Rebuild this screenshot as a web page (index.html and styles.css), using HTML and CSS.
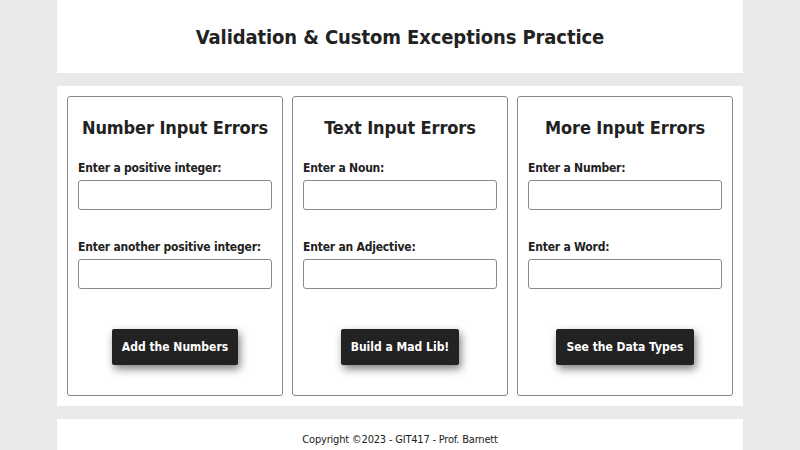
FILE: index.html
```html
<!DOCTYPE html>
<html lang="en">
<head>
    <meta charset="UTF-8">
    <meta name="viewport" content="width=device-width, initial-scale=1.0">
    <title>Validation &amp; Custom Exceptions Practice</title>
    <link rel="stylesheet" href="styles.css">
</head>
<body>
    <header class="page-header">
        <h1>Validation &amp; Custom Exceptions Practice</h1>
    </header>

    <main class="practice">
        <section class="card">
            <h2>Number Input Errors</h2>
            <label for="num1">Enter a positive integer:</label>
            <input type="text" id="num1">
            <label for="num2">Enter another positive integer:</label>
            <input type="text" id="num2">
            <button id="add-btn">Add the Numbers</button>
        </section>

        <section class="card">
            <h2>Text Input Errors</h2>
            <label for="noun">Enter a Noun:</label>
            <input type="text" id="noun">
            <label for="adjective">Enter an Adjective:</label>
            <input type="text" id="adjective">
            <button id="madlib-btn">Build a Mad Lib!</button>
        </section>

        <section class="card">
            <h2>More Input Errors</h2>
            <label for="number">Enter a Number:</label>
            <input type="text" id="number">
            <label for="word">Enter a Word:</label>
            <input type="text" id="word">
            <button id="types-btn">See the Data Types</button>
        </section>
    </main>

    <footer class="page-footer">
        <p>Copyright &copy;2023 - GIT417 - Prof. Barnett</p>
    </footer>
</body>
</html>
```

FILE: styles.css
```css
* {
    box-sizing: border-box;
    margin: 0;
    padding: 0;
}

body {
    background-color: #e9e9e9;
    color: #222;
    font-family: "DejaVu Sans Condensed", "DejaVu Sans", sans-serif;
    width: 686px;
    margin: 0 auto;
}

.page-header {
    background: white;
    height: 73px;
    display: flex;
    align-items: center;
    justify-content: center;
    margin-bottom: 13px;
}

.page-header h1 {
    font-size: 20px;
    font-weight: bold;
    letter-spacing: -0.1px;
}

.practice {
    background: white;
    display: flex;
    gap: 9px;
    padding: 10px;
    margin-bottom: 13px;
}

.card {
    flex: 1;
    height: 300px;
    border: 1px solid #8a8a8a;
    border-radius: 3px;
    padding: 10px;
    display: flex;
    flex-direction: column;
}

.card h2 {
    font-size: 18px;
    line-height: 22px;
    letter-spacing: -0.1px;
    text-align: center;
    margin: 10px 0 21px;
}

.card label {
    font-size: 12px;
    font-weight: bold;
    line-height: 16px;
    letter-spacing: -0.2px;
    white-space: nowrap;
    margin-bottom: 4px;
}

.card input {
    height: 30px;
    border: 1px solid #8a8a8a;
    border-radius: 3px;
    margin-bottom: 29px;
    font-size: 13px;
    padding: 0 6px;
}

.card input:nth-of-type(2) {
    margin-bottom: 40px;
}

.card button {
    align-self: center;
    background-color: #222;
    color: white;
    border: none;
    border-radius: 2px;
    font-family: inherit;
    font-size: 12px;
    font-weight: bold;
    height: 36px;
    padding: 0 10px;
    box-shadow: 2px 4px 8px rgba(0, 0, 0, 0.5);
    cursor: pointer;
}

.page-footer {
    background: white;
    height: 40px;
    display: flex;
    justify-content: center;
    padding-top: 14px;
    font-size: 11px;
    letter-spacing: -0.2px;
}
```
